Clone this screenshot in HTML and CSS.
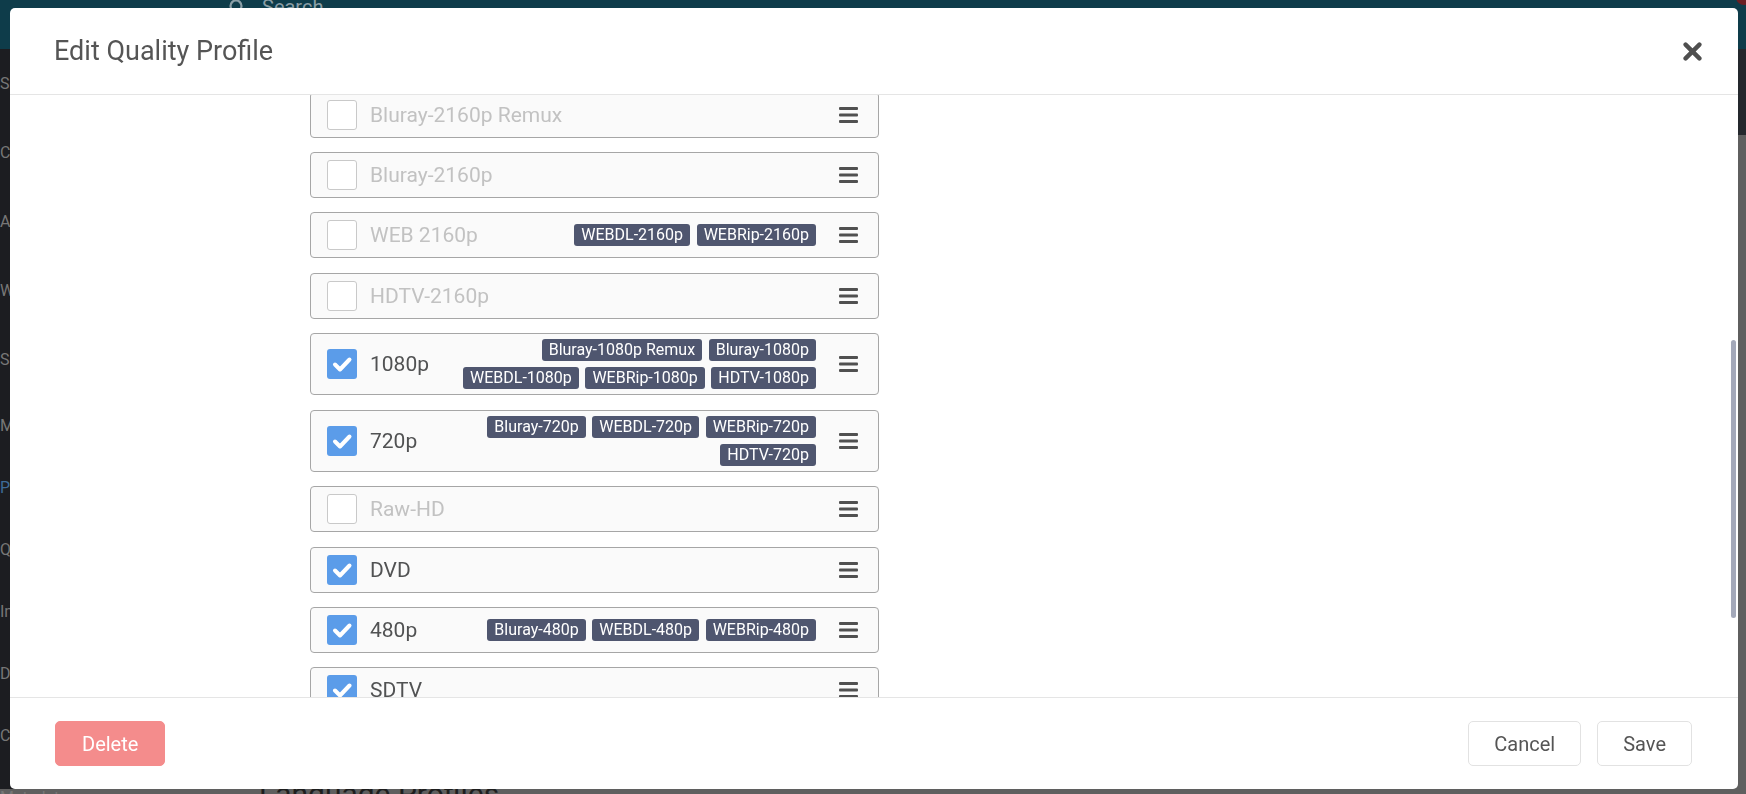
FILE: index.html
```html
<!DOCTYPE html>
<html lang="en">
<head>
  <meta charset="UTF-8">
  <meta name="viewport" content="width=device-width, initial-scale=1.0">
  <title>Sonarr - Edit Quality Profile</title>
  <link rel="stylesheet" href="styles.css">
</head>
<body>
  <!-- Page behind the modal (already dimmed) -->
  <div class="app">
    <header class="page-header">
      <div class="search">
        <svg width="16" height="16" viewBox="0 0 16 16"><circle cx="7" cy="7" r="5.5" fill="none" stroke="currentColor" stroke-width="2.2"/><path d="M11 11l4 4" stroke="currentColor" stroke-width="2.2"/></svg>
        <span>Search</span>
      </div>
      <span class="health-dot"></span>
    </header>
    <div class="page-main">
      <nav class="sidebar">
        <a class="nav-item">Series</a>
        <a class="nav-item">Calendar</a>
        <a class="nav-item">Activity</a>
        <a class="nav-item">Wanted</a>
        <a class="nav-item">Settings</a>
        <a class="nav-item sub">Media Management</a>
        <a class="nav-item sub active">Profiles</a>
        <a class="nav-item sub">Quality</a>
        <a class="nav-item sub">Indexers</a>
        <a class="nav-item sub">Download Clients</a>
        <a class="nav-item sub">Connect</a>
        <a class="nav-item sub">Metadata</a>
      </nav>
      <main class="page-content">
        <div class="toolbar"></div>
        <h2 class="section-title">Language Profiles</h2>
      </main>
    </div>
  </div>

  <!-- Modal -->
  <div class="modal-layer">
    <div class="modal">
      <div class="modal-header">
        <span class="modal-title">Edit Quality Profile</span>
        <svg class="close" width="19" height="19" viewBox="0 0 19 19"><path d="M2.6 2.6L16.4 16.4M16.4 2.6L2.6 16.4" stroke="#4f4f4f" stroke-width="4.4" stroke-linecap="round"/></svg>
      </div>

      <div class="modal-body">
        <div class="quality-list">
          <div class="quality-item">
            <span class="check off"></span>
            <span class="name">Bluray-2160p Remux</span>
            <svg class="handle" viewBox="0 0 19 16"><rect y="0" width="19" height="3" rx="1"/><rect y="6.5" width="19" height="3" rx="1"/><rect y="13" width="19" height="3" rx="1"/></svg>
          </div>
          <div class="quality-item">
            <span class="check off"></span>
            <span class="name">Bluray-2160p</span>
            <svg class="handle" viewBox="0 0 19 16"><rect y="0" width="19" height="3" rx="1"/><rect y="6.5" width="19" height="3" rx="1"/><rect y="13" width="19" height="3" rx="1"/></svg>
          </div>
          <div class="quality-item">
            <span class="check off"></span>
            <span class="name">WEB 2160p</span>
            <div class="tags">
              <span class="tag">WEBDL-2160p</span>
              <span class="tag">WEBRip-2160p</span>
            </div>
            <svg class="handle" viewBox="0 0 19 16"><rect y="0" width="19" height="3" rx="1"/><rect y="6.5" width="19" height="3" rx="1"/><rect y="13" width="19" height="3" rx="1"/></svg>
          </div>
          <div class="quality-item">
            <span class="check off"></span>
            <span class="name">HDTV-2160p</span>
            <svg class="handle" viewBox="0 0 19 16"><rect y="0" width="19" height="3" rx="1"/><rect y="6.5" width="19" height="3" rx="1"/><rect y="13" width="19" height="3" rx="1"/></svg>
          </div>
          <div class="quality-item allowed">
            <span class="check on"><svg viewBox="0 0 30 30"><path d="M8 15.5l5 5 9.5-10" fill="none" stroke="#fff" stroke-width="4" stroke-linecap="round" stroke-linejoin="round"/></svg></span>
            <span class="name">1080p</span>
            <div class="tags">
              <span class="tag">Bluray-1080p Remux</span>
              <span class="tag">Bluray-1080p</span>
              <span class="tag">WEBDL-1080p</span>
              <span class="tag">WEBRip-1080p</span>
              <span class="tag">HDTV-1080p</span>
            </div>
            <svg class="handle" viewBox="0 0 19 16"><rect y="0" width="19" height="3" rx="1"/><rect y="6.5" width="19" height="3" rx="1"/><rect y="13" width="19" height="3" rx="1"/></svg>
          </div>
          <div class="quality-item allowed">
            <span class="check on"><svg viewBox="0 0 30 30"><path d="M8 15.5l5 5 9.5-10" fill="none" stroke="#fff" stroke-width="4" stroke-linecap="round" stroke-linejoin="round"/></svg></span>
            <span class="name">720p</span>
            <div class="tags">
              <span class="tag">Bluray-720p</span>
              <span class="tag">WEBDL-720p</span>
              <span class="tag">WEBRip-720p</span>
              <span class="tag">HDTV-720p</span>
            </div>
            <svg class="handle" viewBox="0 0 19 16"><rect y="0" width="19" height="3" rx="1"/><rect y="6.5" width="19" height="3" rx="1"/><rect y="13" width="19" height="3" rx="1"/></svg>
          </div>
          <div class="quality-item">
            <span class="check off"></span>
            <span class="name">Raw-HD</span>
            <svg class="handle" viewBox="0 0 19 16"><rect y="0" width="19" height="3" rx="1"/><rect y="6.5" width="19" height="3" rx="1"/><rect y="13" width="19" height="3" rx="1"/></svg>
          </div>
          <div class="quality-item allowed">
            <span class="check on"><svg viewBox="0 0 30 30"><path d="M8 15.5l5 5 9.5-10" fill="none" stroke="#fff" stroke-width="4" stroke-linecap="round" stroke-linejoin="round"/></svg></span>
            <span class="name">DVD</span>
            <svg class="handle" viewBox="0 0 19 16"><rect y="0" width="19" height="3" rx="1"/><rect y="6.5" width="19" height="3" rx="1"/><rect y="13" width="19" height="3" rx="1"/></svg>
          </div>
          <div class="quality-item allowed">
            <span class="check on"><svg viewBox="0 0 30 30"><path d="M8 15.5l5 5 9.5-10" fill="none" stroke="#fff" stroke-width="4" stroke-linecap="round" stroke-linejoin="round"/></svg></span>
            <span class="name">480p</span>
            <div class="tags">
              <span class="tag">Bluray-480p</span>
              <span class="tag">WEBDL-480p</span>
              <span class="tag">WEBRip-480p</span>
            </div>
            <svg class="handle" viewBox="0 0 19 16"><rect y="0" width="19" height="3" rx="1"/><rect y="6.5" width="19" height="3" rx="1"/><rect y="13" width="19" height="3" rx="1"/></svg>
          </div>
          <div class="quality-item allowed">
            <span class="check on"><svg viewBox="0 0 30 30"><path d="M8 15.5l5 5 9.5-10" fill="none" stroke="#fff" stroke-width="4" stroke-linecap="round" stroke-linejoin="round"/></svg></span>
            <span class="name">SDTV</span>
            <svg class="handle" viewBox="0 0 19 16"><rect y="0" width="19" height="3" rx="1"/><rect y="6.5" width="19" height="3" rx="1"/><rect y="13" width="19" height="3" rx="1"/></svg>
          </div>
        </div>

        <!-- scrollbar thumb -->
        <div class="scroll-thumb"></div>
      </div>

      <div class="modal-footer">
        <button class="btn btn-danger">Delete</button>
        <button class="btn">Cancel</button>
        <button class="btn">Save</button>
      </div>
    </div>
  </div>
</body>
</html>
```

FILE: styles.css
```css
/* General */
body {
  margin: 0;
  width: 1746px;
  height: 794px;
  overflow: hidden;
  font-family: Roboto, 'Noto Sans', sans-serif;
  background: #5f5f5f;
}

/* Page behind the modal (already dimmed) */
.app {
  height: 100%;
}

.page-header {
  position: relative;
  height: 54px;
  background: #0e3c4a;
}

.page-header .search {
  display: flex;
  align-items: center;
  gap: 17px;
  height: 24px;
  margin-top: -5px;
  padding-left: 229px;
  font-size: 20px;
  color: #8a9ea6;
}

.page-header .health-dot {
  position: absolute;
  right: -6px;
  top: -6px;
  width: 16px;
  height: 16px;
  border-radius: 50%;
  background: #6b1f24;
}

.page-main {
  display: flex;
  height: calc(100% - 54px);
}

.sidebar {
  display: flex;
  flex-direction: column;
  flex: none;
  width: 229px;
  background: #1c1d21;
}

.sidebar .nav-item {
  display: flex;
  align-items: center;
  flex: none;
  height: 69px;
  font-size: 16px;
  color: #777;
  white-space: nowrap;
}

.sidebar .nav-item.sub {
  height: 62px;
}

.sidebar .nav-item.active {
  color: #3e6b98;
}

.page-content {
  flex: 1;
  background: #5f5f5f;
}

.page-content .toolbar {
  height: 86px;
  background: #24282d;
}

.page-content .section-title {
  margin: 641px 0 0;
  padding-left: 30px;
  font-size: 30px;
  line-height: 36px;
  font-weight: 400;
  color: #1e1e1e;
}

/* Modal */
.modal-layer {
  position: fixed;
  inset: 0;
  display: flex;
  padding: 8px 8px 5px 10px;
}

.modal {
  flex: 1;
  display: flex;
  flex-direction: column;
  background: #fff;
  border-radius: 5px;
  overflow: hidden;
}

.modal-header {
  flex: none;
  display: flex;
  align-items: center;
  height: 86px;
  padding: 0 36px 0 44px;
  border-bottom: 1px solid #e5e5e5;
}

.modal-title {
  flex: 1;
  font-size: 27px;
  color: #555;
}

.modal-body {
  position: relative;
  flex: 1;
  overflow: hidden;
  padding-left: 300px;
}

.quality-list {
  width: 569px;
  margin-top: -3px;
}

.quality-item {
  display: flex;
  align-items: center;
  box-sizing: border-box;
  min-height: 46px;
  margin-bottom: 14.2px;
  padding: 0 20px 0 16px;
  border: 1px solid #a6a6a6;
  border-radius: 4px;
  background: #fafafa;
}

.quality-item .check {
  flex: none;
  box-sizing: border-box;
  width: 30px;
  height: 30px;
  border-radius: 3px;
}

.quality-item .check.off {
  border: 1px solid #c9c9c9;
  background: #fff;
}

.quality-item .check.on {
  background: #5b9ce9;
}

.quality-item .check svg {
  display: block;
  width: 30px;
  height: 30px;
}

.quality-item .name {
  flex: none;
  margin-left: 13px;
  font-size: 21px;
  color: #c2c2c2;
  white-space: nowrap;
}

.quality-item.allowed .name {
  color: #515253;
}

.quality-item .tags {
  flex: 1;
  display: flex;
  flex-wrap: wrap;
  justify-content: flex-end;
  gap: 6.3px 6.6px;
  margin: 0 23px 0 14px;
  padding: 5.2px 0;
}

.quality-item .tag {
  padding: 0 7px;
  border-radius: 3px;
  background: #4f566f;
  color: #fff;
  font-size: 16px;
  line-height: 22px;
  white-space: nowrap;
}

.quality-item .handle {
  flex: none;
  width: 19px;
  height: 16px;
  margin-left: auto;
  fill: #505050;
}

.scroll-thumb {
  position: absolute;
  right: 2px;
  top: 245px;
  width: 5px;
  height: 278px;
  border-radius: 3px;
  background: #a3a8b9;
}

.modal-footer {
  flex: none;
  display: flex;
  align-items: center;
  gap: 16px;
  height: 91px;
  padding: 0 46px 0 45px;
  border-top: 1px solid #e5e5e5;
}

.btn {
  height: 45px;
  padding: 0 25px;
  border: 1px solid #e2e2e2;
  border-radius: 5px;
  background: #fff;
  color: #555;
  font-family: Roboto, 'Noto Sans', sans-serif;
  font-size: 20px;
}

.btn-danger {
  margin-right: auto;
  padding: 0 26px;
  border-color: #f48c8c;
  background: #f48c8c;
  color: #fff;
}
```
